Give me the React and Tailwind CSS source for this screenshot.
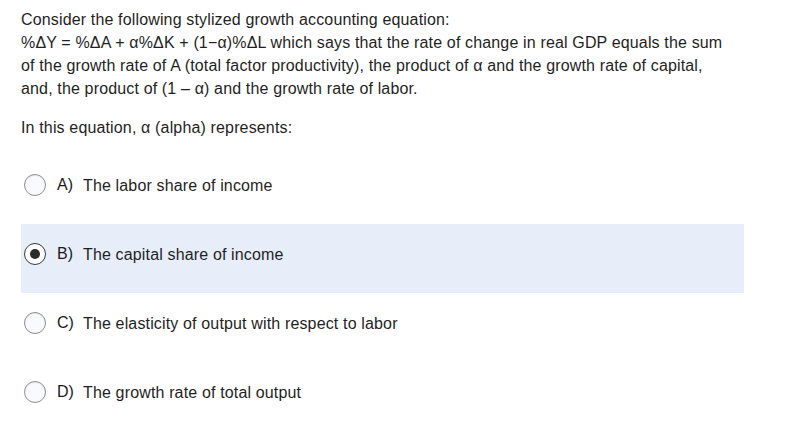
import React from "react";

const options = [
  { key: "A)", text: "The labor share of income", selected: false },
  { key: "B)", text: "The capital share of income", selected: true },
  { key: "C)", text: "The elasticity of output with respect to labor", selected: false },
  { key: "D)", text: "The growth rate of total output", selected: false },
];

function Radio({ selected }) {
  return (
    <span
      className={
        selected
          ? "flex h-[22px] w-[22px] shrink-0 items-center justify-center rounded-full border-[1.5px] border-[#3a3a3a] bg-white"
          : "flex h-[22px] w-[22px] shrink-0 items-center justify-center rounded-full border border-[#8e8e8e] bg-[#f9fafd] shadow-[inset_0_1px_1px_rgba(0,0,0,0.08)]"
      }
    >
      {selected && <span className="h-[10px] w-[10px] rounded-full bg-[#2b2b2b]" />}
    </span>
  );
}

export default function App() {
  return (
    <div
      className="min-h-[423px] w-[798px] bg-white pt-[8px] text-[#1f1f1f]"
      style={{ fontFamily: '"Liberation Sans", Arial, Helvetica, sans-serif' }}
    >
      <div className="px-[21px] text-[16px] leading-[23px] tracking-[0.15px]">
        <p className="whitespace-nowrap">
          Consider the following stylized growth accounting equation:
          <br />
          %ΔY = %ΔA + α%ΔK + (1−α)%ΔL which says that the rate of change in real GDP equals the sum
          <br />
          of the growth rate of A (total factor productivity), the product of α and the growth rate of capital,
          <br />
          and, the product of (1 – α) and the growth rate of labor.
        </p>
        <p className="mt-[16px]">In this equation, α (alpha) represents:</p>
      </div>
      <div className="mt-[16px] ml-[21px] flex w-[723px] flex-col">
        {options.map((o) => (
          <div
            key={o.key}
            className={
              o.selected
                ? "flex h-[69px] items-start bg-[#e7eefa] pl-[3px] pt-[18px]"
                : "flex h-[69px] items-start pl-[3px] pt-[18px]"
            }
          >
            <div className="flex items-center">
              <Radio selected={o.selected} />
              <span className="ml-[11px] w-[26px] text-[16px] leading-[22px] text-[#1a1a1a]">{o.key}</span>
              <span className="pt-[2px] text-[16px] leading-[22px] tracking-[0.15px]">{o.text}</span>
            </div>
          </div>
        ))}
      </div>
    </div>
  );
}
